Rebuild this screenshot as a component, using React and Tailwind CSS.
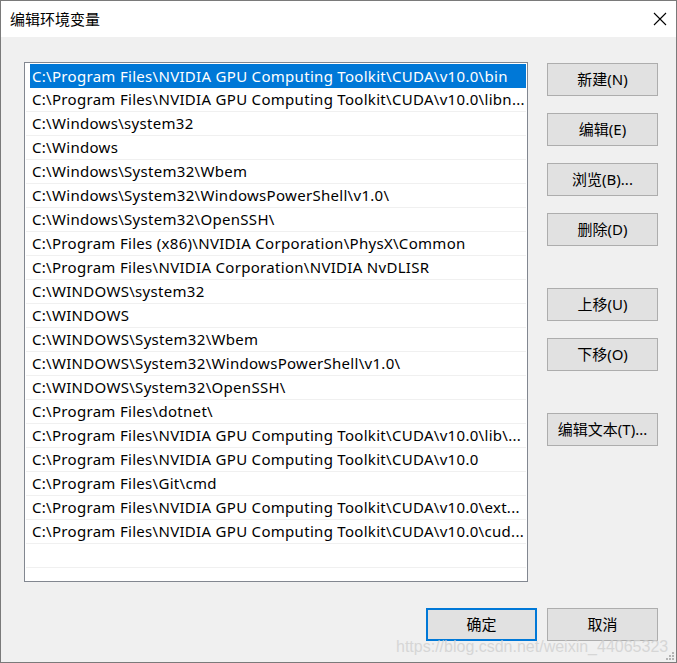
import React from 'react';

const paths = [
  'C:\\Program Files\\NVIDIA GPU Computing Toolkit\\CUDA\\v10.0\\bin',
  'C:\\Program Files\\NVIDIA GPU Computing Toolkit\\CUDA\\v10.0\\libn...',
  'C:\\Windows\\system32',
  'C:\\Windows',
  'C:\\Windows\\System32\\Wbem',
  'C:\\Windows\\System32\\WindowsPowerShell\\v1.0\\',
  'C:\\Windows\\System32\\OpenSSH\\',
  'C:\\Program Files (x86)\\NVIDIA Corporation\\PhysX\\Common',
  'C:\\Program Files\\NVIDIA Corporation\\NVIDIA NvDLISR',
  'C:\\WINDOWS\\system32',
  'C:\\WINDOWS',
  'C:\\WINDOWS\\System32\\Wbem',
  'C:\\WINDOWS\\System32\\WindowsPowerShell\\v1.0\\',
  'C:\\WINDOWS\\System32\\OpenSSH\\',
  'C:\\Program Files\\dotnet\\',
  'C:\\Program Files\\NVIDIA GPU Computing Toolkit\\CUDA\\v10.0\\lib\\...',
  'C:\\Program Files\\NVIDIA GPU Computing Toolkit\\CUDA\\v10.0',
  'C:\\Program Files\\Git\\cmd',
  'C:\\Program Files\\NVIDIA GPU Computing Toolkit\\CUDA\\v10.0\\ext...',
  'C:\\Program Files\\NVIDIA GPU Computing Toolkit\\CUDA\\v10.0\\cud...',
  '',
  '',
];

const FONT = { fontFamily: '"Noto Sans", "Noto Sans CJK SC", sans-serif' };

function Btn({ children, className = '' }) {
  return (
    <div
      className={`w-[111px] h-[33px] flex items-center justify-center border border-[#adadad] bg-[#e1e1e1] text-[15px] text-black ${className}`}
    >
      {children}
    </div>
  );
}

export default function App() {
  return (
    <div
      className="relative w-[677px] h-[663px] border border-[#7a7a7a] bg-[#f0f0f0] flex flex-col overflow-hidden"
      style={FONT}
    >
      {/* Title bar */}
      <div className="h-[36px] bg-white flex items-center justify-between pl-[9px] pr-[8px] shrink-0">
        <span className="text-[15px] text-black">编辑环境变量</span>
        <svg width="14" height="14" viewBox="0 0 14 14" className="mr-[1px]">
          <path d="M1 1 L13 13 M13 1 L1 13" stroke="#000" strokeWidth="1.1" />
        </svg>
      </div>

      <div className="flex pl-[23px] pt-[25px]">
        {/* Path list */}
        <div className="w-[504px] h-[520px] border border-[#828790] bg-white pt-[1px] pl-[1px] pr-[1px] overflow-hidden">
          {paths.map((p, i) => (
            <div
              key={i}
              className={`h-[24px] flex items-center whitespace-nowrap overflow-hidden text-[15px] tracking-[0.3px] ${
                i === 0 ? 'bg-[#0078d7] text-white ml-[4px] pl-[2px]' : 'border-b border-[#f0f0f0] text-black pl-[6px]'
              }`}
            >
              {p}
            </div>
          ))}
        </div>

        {/* Side buttons */}
        <div className="ml-[19px] pt-[1px] flex flex-col">
          <Btn>新建(N)</Btn>
          <Btn className="mt-[17px]">编辑(E)</Btn>
          <Btn className="mt-[17px]">浏览(B)...</Btn>
          <Btn className="mt-[17px]">删除(D)</Btn>
          <Btn className="mt-[42px]">上移(U)</Btn>
          <Btn className="mt-[17px]">下移(O)</Btn>
          <Btn className="mt-[42px]">编辑文本(T)...</Btn>
        </div>
      </div>

      {/* Bottom buttons */}
      <div className="flex justify-end gap-[10px] pr-[18px] mt-[26px]">
        <div className="w-[111px] h-[33px] flex items-center justify-center border-2 border-[#0078d7] bg-[#e1e1e1] text-[15px] text-black">
          确定
        </div>
        <Btn>取消</Btn>
      </div>

      {/* Watermark */}
      <div
        className="absolute left-[395px] top-[634px] text-[16px] text-[#d0d0d0] opacity-80 whitespace-nowrap"
        style={{ fontFamily: '"Liberation Sans", sans-serif' }}
      >
        https://blog.csdn.net/weixin_44065323
      </div>

      {/* Resize grip */}
      <svg width="10" height="10" viewBox="0 0 10 10" className="absolute right-[2px] bottom-[2px]">
        {[[8, 0], [8, 3], [5, 3], [8, 6], [5, 6], [2, 6]].map(([x, y], i) => (
          <rect key={i} x={x} y={y + 2} width="2" height="2" fill="#b4b4b4" />
        ))}
      </svg>
    </div>
  );
}
